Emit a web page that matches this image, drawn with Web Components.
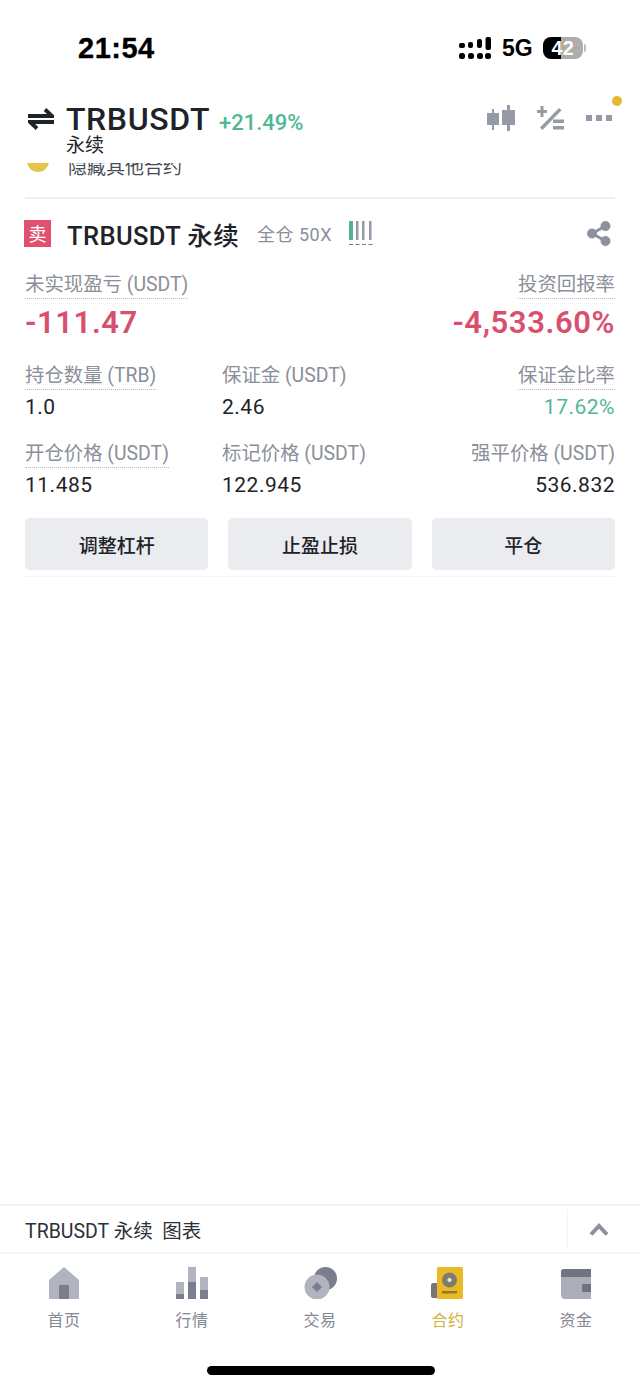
<!DOCTYPE html>
<html lang="zh"><head><meta charset="utf-8"><title>TRBUSDT</title>
<style>
html,body{margin:0;padding:0;background:#fff}
body{font-family:Roboto,"Noto Sans CJK SC",sans-serif;color:#1e2329}
</style></head><body>
<app-screen>
  <status-bar slot="top"></status-bar>
  <market-header slot="top"></market-header>
  <hidden-row></hidden-row>
  <position-card></position-card>
  <chart-bar slot="bottom"></chart-bar>
  <tab-bar slot="bottom"></tab-bar>
</app-screen>
<script>
function def(name,html){
  customElements.define(name,class extends HTMLElement{
    connectedCallback(){
      if(this.shadowRoot)return;
      const r=this.attachShadow({mode:'open'});
      r.innerHTML=typeof html==='function'?html(this):html;
    }
  });
}
def('app-screen',`<style>
:host{display:flex;flex-direction:column;width:640px;height:1388px;overflow:hidden;background:#fff}
.mid{flex:1;min-height:0;overflow:hidden}
.top{position:relative;z-index:1;background:#fff}
</style><div class="top"><slot name="top"></slot></div><div class="mid"><slot></slot></div><slot name="bottom"></slot>`);

def('status-bar',`<style>
:host{display:flex;height:96px;box-sizing:border-box;padding:26px 0 0 78px;align-items:flex-start;font-family:"Liberation Sans",sans-serif;color:#000}
.t{font-size:29px;font-weight:700;line-height:44px;letter-spacing:.5px;width:381px;flex:none;-webkit-text-stroke:.3px #000}
.r{display:flex;align-items:center;height:44px}
.g{font-size:23px;font-weight:700;margin:0 10px 0 11px;line-height:44px}
.b{position:relative;display:flex;width:40px;height:22px;border-radius:8px;overflow:hidden;background:linear-gradient(90deg,#000 0 45%,#adadad 45%)}
.b span{flex:1;text-align:center;color:#fff;font-size:20px;font-weight:700;line-height:22px}
.n{width:2px;height:8px;background:#bbb;border-radius:0 2px 2px 0;margin-left:1px}
</style><div class="t">21:54</div><div class="r">
<svg width="32" height="22" viewBox="0 0 32 22" fill="#000"><rect x="0" y="6" width="6" height="5" rx="2"/><rect x="0" y="16" width="6" height="6" rx="2.5"/><rect x="9" y="5" width="5" height="6" rx="2"/><rect x="9" y="16" width="6" height="6" rx="2.5"/><rect x="18" y="2" width="5" height="9" rx="2"/><rect x="18" y="16" width="6" height="6" rx="2.5"/><rect x="26.500" y="0" width="5.500" height="13" rx="2"/><rect x="26" y="16" width="6" height="6" rx="2.500"/></svg>
<div class="g">5G</div><div class="b"><span>42</span></div><div class="n"></div></div>`);

def('market-header',`<style>
:host{display:flex;height:67px;box-sizing:border-box;padding-left:28px;position:relative;background:#fff}
.sw{margin-top:12px;flex:none}
.c{margin-left:12px;display:flex;flex-direction:column;padding-top:7px}
.top{display:flex;align-items:baseline;height:33px}
.n{font-size:32px;font-weight:500;line-height:33px;letter-spacing:.6px;color:#1e2329}
.p{font-size:22px;color:#4db893;margin-left:9px;font-weight:500}
.s{font-size:19px;line-height:19px;color:#1e2329}
.ic{margin-left:auto;display:flex;align-items:flex-start;padding-top:9px;padding-right:28px;gap:21px}
.dot{position:absolute;right:18px;top:0;width:10px;height:10px;border-radius:50%;background:#e5b92f}
</style>
<svg class="sw" width="26" height="22" viewBox="0 0 26 22" fill="none" stroke="#1e2329" stroke-width="3.800"><path d="M0 8H24L17 1.500"/><path d="M26 14H2L9 20.500"/></svg>
<div class="c"><div class="top"><span class="n">TRBUSDT</span><span class="p">+21.49%</span></div><div class="s">永续</div></div>
<div class="ic">
<svg width="29" height="26" viewBox="0 0 29 26" fill="#9699a6"><rect x="0" y="8" width="12" height="12"/><rect x="5" y="4" width="2" height="21"/><rect x="15" y="5" width="13" height="15"/><rect x="20" y="0" width="3" height="26"/></svg>
<svg width="28" height="24" viewBox="0 0 28 24" fill="#9699a6" style="margin-top:1px"><path d="M0 4h10v3H0zM3.500 0h3v11h-3z"/><path d="M3 21.500 22 2l2.500 2.300L5.500 24z"/><rect x="16" y="13.500" width="11" height="3.500"/><rect x="16" y="20" width="11" height="3.500"/></svg>
<svg width="26" height="6" viewBox="0 0 26 6" fill="#9699a6" style="margin-top:10px"><rect width="6" height="6"/><rect x="10" width="6" height="6"/><rect x="20" width="6" height="6"/></svg>
</div><div class="dot"></div>`);

def('hidden-row',`<style>
:host{display:flex;align-items:flex-end;height:34px;margin:0 25px;border-bottom:2px solid #eef0f2;overflow:hidden;box-sizing:content-box}
.i{display:flex;align-items:center;height:30px;margin-bottom:17px;color:#474d57;font-size:19px;gap:19px;flex:none}
.o{width:22px;height:22px;border-radius:50%;background:#e5c44a;margin-left:2px;margin-top:-8px}
</style><div class="i"><div class="o"></div><span>隐藏其他合约</span></div>`);

def('metric-cell',h=>{
  const a=n=>h.getAttribute(n), big=a('big')!==null;
  return `<style>
:host{display:flex;flex-direction:column;align-items:${a('end')!==null?'flex-end':'flex-start'}}
.l{font-size:19.400px;line-height:26px;color:#8b8f99;border-bottom:${a('plain')!==null?'1px solid transparent':'1px dotted #b7bac1'}}
.v{line-height:34px;margin-top:${big?'7px':'0'};font-size:${big?'31px':'21px'};font-weight:${big?'600':'400'};color:${{r:'#d9506f',g:'#4db893'}[a('c')]||'#1e2329'};letter-spacing:${big?'.6px':'.5px'}}
</style><div class="l">${a('label')}</div><div class="v"><slot></slot></div>`});

def('action-button',`<style>
:host{display:flex;align-items:center;justify-content:center;height:52px;background:#eaecf0;border-radius:5px;font-size:19px;font-weight:500;color:#1e2329}
</style><slot></slot>`);

def('position-card',`<style>
:host{display:block;margin:0 25px;padding-top:19px;box-sizing:border-box;height:376px}
.h{display:flex;align-items:center;height:30px;margin-left:-1px}
.b{width:27px;height:27px;background:#e2506f;color:#fff;font-size:18px;display:flex;align-items:center;justify-content:center;flex:none}
.n{font-size:25.500px;font-weight:500;margin-left:16px;letter-spacing:.4px;width:190px;flex:none;white-space:nowrap}
.m{font-size:18px;color:#8b8f99;letter-spacing:.5px;width:92px;flex:none}
.bars{flex:none}
.sh{margin-left:auto;margin-right:4px}
.g{display:grid;grid-template-columns:197px 1fr auto;margin-top:24px}
.big{grid-column:1/-1;display:flex;justify-content:space-between;height:91px}
.r{height:78px}
.r2{height:72px}
.btn{display:grid;grid-template-columns:repeat(3,1fr);gap:20px;margin-top:5px}
.ln{height:1px;background:#f3f4f5;margin-top:6px}
</style>
<div class="h"><div class="b">卖</div><div class="n">TRBUSDT 永续</div><div class="m">全仓 50X</div>
<svg class="bars" width="24" height="25" viewBox="0 0 24 25"><rect x="0" y="0" width="4" height="19" fill="#58ae98"/><rect x="7" y="0" width="2.500" height="19" fill="#9699a6"/><rect x="13" y="0" width="2.500" height="19" fill="#9699a6"/><rect x="20" y="0" width="2.500" height="19" fill="#9699a6"/><path d="M0 23.500h24" stroke="#777" stroke-width="1" stroke-dasharray="4 2.500"/></svg>
<svg class="sh" width="24" height="25" viewBox="0 0 24 25" fill="#8e919d" stroke="#8e919d"><path d="M18.500 5 5 12.500 18.500 20" fill="none" stroke-width="3"/><circle cx="18.500" cy="5" r="4.500"/><circle cx="5" cy="12.500" r="4.500"/><circle cx="18.500" cy="20" r="4.500"/></svg>
</div>
<div class="g">
<div class="big"><metric-cell label="未实现盈亏 (USDT)" big c="r">-111.47</metric-cell><metric-cell label="投资回报率" big c="r" end>-4,533.60%</metric-cell></div>
<metric-cell class="r" label="持仓数量 (TRB)">1.0</metric-cell><metric-cell class="r" label="保证金 (USDT)" plain>2.46</metric-cell><metric-cell class="r" label="保证金比率" end c="g">17.62%</metric-cell>
<metric-cell class="r2" label="开仓价格 (USDT)">11.485</metric-cell><metric-cell class="r2" label="标记价格 (USDT)" plain>122.945</metric-cell><metric-cell class="r2" label="强平价格 (USDT)" end plain>536.832</metric-cell>
</div>
<div class="btn"><action-button>调整杠杆</action-button><action-button>止盈止损</action-button><action-button>平仓</action-button></div>
<div class="ln"></div>`);

def('chart-bar',`<style>
:host{display:flex;height:50px;box-sizing:border-box;align-items:center;border-top:2px solid #f0f1f3;border-bottom:2px solid #f5f6f7;padding-left:25px;font-size:19.500px;color:#2b3139}
.t{flex:1;white-space:pre}
.c{width:73px;height:38px;border-left:1px solid #f4f4f5;display:flex;align-items:center;justify-content:center;padding-right:10px;box-sizing:border-box}
</style><div class="t">TRBUSDT 永续  图表</div><div class="c"><svg width="20" height="13" viewBox="0 0 20 13" fill="none" stroke="#8e919d" stroke-width="4"><path d="M2 11.500 10 3l8 8.500"/></svg></div>`);

def('tab-item',h=>`<style>
:host{display:flex;flex-direction:column;align-items:center;flex:1;min-width:0;font-size:16px;letter-spacing:.4px;color:${h.hasAttribute('active')?'#d3b23a':'#848892'}}
.i{height:32px;display:flex;align-items:flex-end;${h.hasAttribute('active')?'margin-right:2px':''}}
.l{line-height:20px;margin-top:12px}
::slotted(svg){display:block}
</style><div class="i"><slot></slot></div><div class="l">${h.getAttribute('label')}</div>`);

def('tab-bar',`<style>
:host{display:flex;flex-direction:column;height:134px;box-sizing:border-box;padding-top:13px;background:#fff}
.r{display:flex;height:99px}
.h{width:228px;height:9px;background:#000;border-radius:5px;margin:0 auto 0 207px}
</style><div class="r">
<tab-item label="首页"><svg width="30" height="32" viewBox="0 0 30 32"><path d="M15 0 30 13v19H0V13z" fill="#b0b4be"/><rect x="10" y="18" width="10" height="14" fill="#7b7f8d"/></svg></tab-item>
<tab-item label="行情"><svg width="33" height="32" viewBox="0 0 33 32" fill="#b0b4be"><rect x="0" y="15" width="8" height="17"/><rect x="12" y="0" width="8" height="32"/><rect x="24" y="10" width="8" height="22"/><g fill="#7b7f8d"><rect x="0" y="27" width="8" height="5"/><rect x="12" y="15" width="8" height="17"/><rect x="24" y="23" width="8" height="9"/></g></svg></tab-item>
<tab-item label="交易"><svg width="34" height="32" viewBox="0 0 34 32"><circle cx="22.500" cy="11.500" r="11.500" fill="#7b7f8d"/><circle cx="14" cy="20" r="12.500" fill="#b0b4be"/><path d="M14 15l5 5-5 5-5-5z" fill="#7b7f8d"/></svg></tab-item>
<tab-item label="合约" active><svg width="32" height="32" viewBox="0 0 32 32"><path d="M0 18a2 2 0 0 1 2-2h5v15H2a2 2 0 0 1-2-2z" fill="#767679"/><rect x="6" y="0" width="26" height="32" rx="1.500" fill="#e9b926"/><circle cx="18.500" cy="13" r="7.500" fill="#7f7c6e"/><path d="M18.500 10.500l2.500 2.500-2.500 2.500-2.500-2.500z" fill="#f0e9d2"/><rect x="11" y="24" width="15" height="2.500" fill="#8c7a35"/></svg></tab-item>
<tab-item label="资金"><svg width="30" height="30" viewBox="0 0 30 30"><path d="M3 0H30V30H4a4 4 0 0 1-4-4V3a3 3 0 0 1 3-3z" fill="#abaeb9"/><path d="M3 0H30V8H0V3a3 3 0 0 1 3-3z" fill="#6f7382"/><rect x="21" y="15" width="9" height="8" fill="#6f7382"/></svg></tab-item>
</div><div class="h"></div>`);
</script>
</body></html>
